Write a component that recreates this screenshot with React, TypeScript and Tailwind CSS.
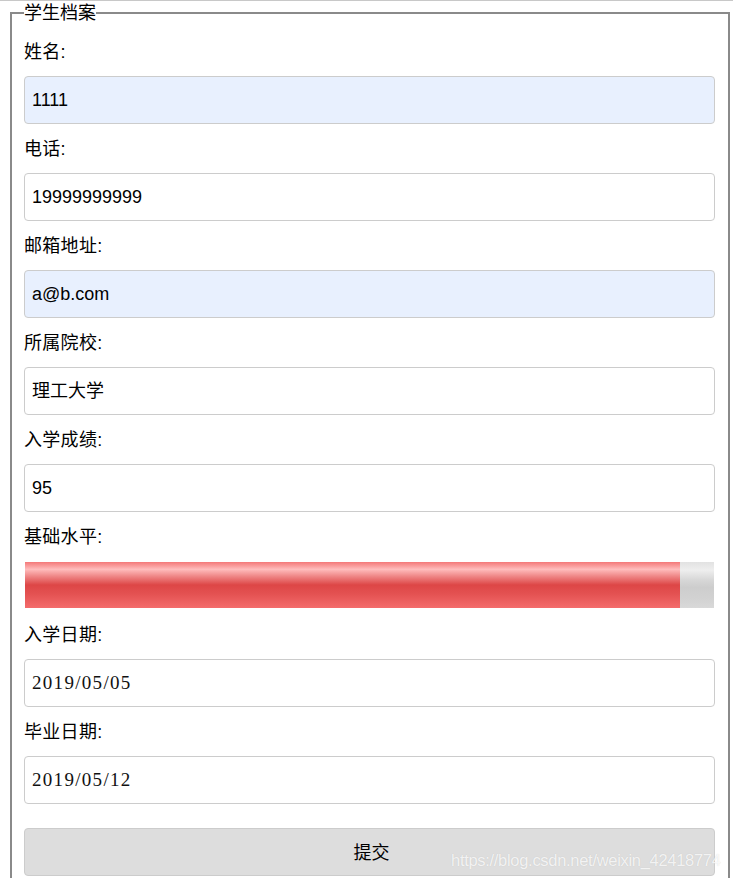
const fields: { label: string; value: string; filled?: boolean }[] = [
  { label: "姓名:", value: "1111", filled: true },
  { label: "电话:", value: "19999999999" },
  { label: "邮箱地址:", value: "a@b.com", filled: true },
  { label: "所属院校:", value: "理工大学" },
  { label: "入学成绩:", value: "95" },
]

const dates = [
  { label: "入学日期:", value: "2019/05/05" },
  { label: "毕业日期:", value: "2019/05/12" },
]

function Label({ text }: { text: string }) {
  return <div className="h-6 leading-6 mb-3 text-[18px] text-black tracking-[0.3px]">{text}</div>
}

export default function App() {
  const level = 95

  return (
    <div
      className="w-[733px] h-[878px] overflow-hidden bg-white relative"
      style={{ fontFamily: '"Liberation Sans", "Noto Sans CJK SC", sans-serif' }}
    >
      <div className="h-px bg-[#c8c8c8]"></div>
      <fieldset className="ml-[10px] w-[720px] mt-px border-2 border-[#8a8a8a] pl-3 pr-[13px] pt-4 pb-6">
        <legend className="text-[18px] leading-[22px] text-black">学生档案</legend>

        {fields.map((f) => (
          <div key={f.label} className="mb-[13px]">
            <Label text={f.label} />
            <div
              className={
                "h-12 border border-[#cccccc] rounded-[4px] px-[7px] flex items-center text-[18px] text-black " +
                (f.filled ? "bg-[#e8f0fe]" : "bg-white")
              }
            >
              {f.value}
            </div>
          </div>
        ))}

        {/* 基础水平 progress */}
        <div className="mb-[14px]">
          <Label text="基础水平:" />
          <div className="h-12 py-px px-px">
            <div className="h-[46px] w-full bg-[linear-gradient(to_bottom,#e2e2e2_0%,#eeeeee_18%,#d8d8d8_38%,#cdcdcd_55%,#d2d2d2_80%,#d9d9d9_100%)]">
              <div
                className="h-full bg-[linear-gradient(to_bottom,#f47878_0%,#ffbcbc_16%,#f08a8a_30%,#dd4646_50%,#e45252_70%,#f46c6c_100%)]"
                style={{ width: `${level}%` }}
              ></div>
            </div>
          </div>
        </div>

        {dates.map((d) => (
          <div key={d.label} className="mb-[13px]">
            <Label text={d.label} />
            <div
              className="h-12 border border-[#cccccc] rounded-[4px] px-[7px] flex items-center text-[19px] tracking-[1.3px] text-[#111]"
              style={{ fontFamily: '"Liberation Serif", "Noto Sans CJK SC", serif' }}
            >
              {d.value}
            </div>
          </div>
        ))}

        <button className="mt-[11px] w-full h-12 bg-[#dddddd] border border-[#cccccc] rounded-[4px] text-[18px] text-black pl-1 pt-0.5">
          提交
        </button>
      </fieldset>

      {/* watermark */}
      <div className="absolute left-[451px] top-[848px] text-[16.5px] text-white/80 tracking-[-0.3px] [text-shadow:0_0_1px_rgba(0,0,0,0.15)]">
        https://blog.csdn.net/weixin_42418774
      </div>
    </div>
  )
}
